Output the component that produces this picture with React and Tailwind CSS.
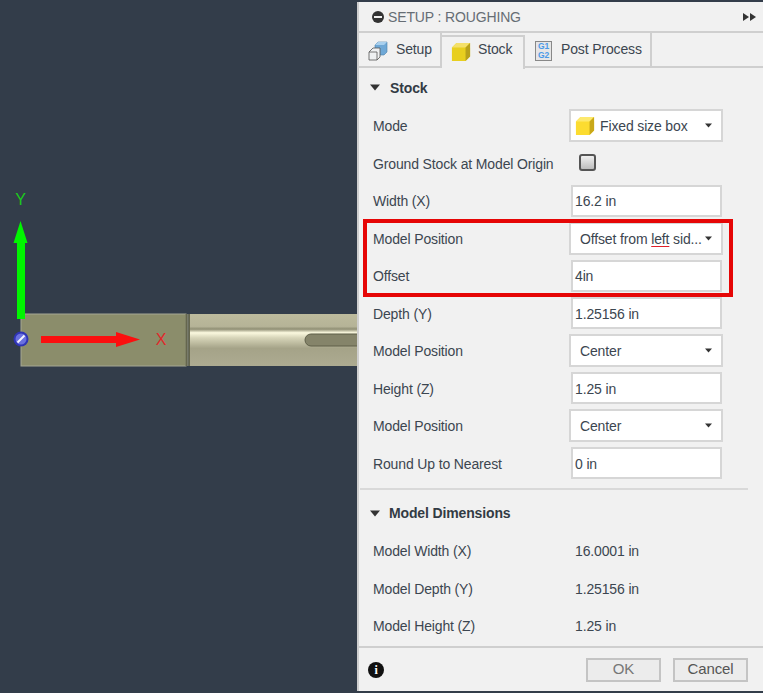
import React from 'react';

const Caret = ({ w = 10, h = 7 }) => (
  <svg width={w} height={h} viewBox="0 0 10 7" className="shrink-0">
    <path d="M0 0.5h10L5 6.500z" fill="#333" />
  </svg>
);

const CubeIcon = ({ size = 22, front = '#e8cf1f', top = '#f4e06a', side = '#b8a11c' }) => (
  <svg width={size} height={size} viewBox="0 0 22 22">
    <path d="M1 6L6 1h15v15l-5 5H1z" fill={front} />
    <path d="M1 6L6 1h15l-5 5z" fill={top} />
    <path d="M16 6l5-5v15l-5 5z" fill={side} />
  </svg>
);

const SetupIcon = () => (
  <svg width="20" height="20" viewBox="0 0 20 20">
    <path d="M7 4l3-3h9v10l-3 3H7z" fill="#6fa8d6" stroke="#4c7fa8" strokeWidth="0.6" />
    <path d="M7 4l3-3h9l-3 3z" fill="#a9d0ee" />
    <path d="M1 11l4-4h7v9l-3 3H1z" fill="#eef0f2" stroke="#555" strokeWidth="0.8" />
    <path d="M1 11h8v8" fill="none" stroke="#555" strokeWidth="0.8" />
  </svg>
);

const Tab = ({ icon, label, active, className = '' }) => (
  <div className={`flex items-center gap-2 border-r-2 border-[#cfcfcf] ${active ? 'bg-[#f1f1f1] border-t-2 mt-[2px] h-[34px] pb-[8px] relative z-10' : 'h-[33px] pb-[2px]'} ${className}`}>
    <span className="mt-[5px] flex">{icon}</span>
    <span className="pt-[1px]">{label}</span>
  </div>
);

const Row = ({ label, labelWidth = 'w-[196px]', children }) => (
  <div className="flex items-center h-[37.5px] pl-[14px]">
    <span className={`${labelWidth} shrink-0 whitespace-nowrap pt-[2px]`}>{label}</span>
    {children}
  </div>
);

const Input = ({ value }) => (
  <div className="ml-[2px] w-[151px] h-[32px] bg-white border-2 border-[#d6d6d6] flex items-center pl-[2px] pt-[2px]">{value}</div>
);

const Select = ({ value, icon }) => (
  <div className="w-[154px] h-[33px] bg-white border-2 border-[#d6d6d6] flex items-center pl-[4px] pr-[9px]">
    {icon}
    <span className="ml-[5px] pt-[2px] whitespace-nowrap flex-1 overflow-hidden">{value}</span>
    <Caret w={7} h={5} />
  </div>
);

const Viewport = () => (
  <svg width="357" height="693" viewBox="0 0 357 693" className="block shrink-0">
    <defs>
      <linearGradient id="shaft" x1="0" y1="0" x2="0" y2="1">
        <stop offset="0" stopColor="#bdbb9d" />
        <stop offset="0.24" stopColor="#b5b397" />
        <stop offset="0.29" stopColor="#8f8e74" />
        <stop offset="0.36" stopColor="#fbf9df" />
        <stop offset="0.46" stopColor="#d6d4b8" />
        <stop offset="0.66" stopColor="#a5a388" />
        <stop offset="1" stopColor="#adab91" />
      </linearGradient>
    </defs>
    <rect x="21" y="314" width="165" height="52" fill="#8b8d6b" stroke="#a5a794" strokeWidth="1" />
    <rect x="185.500" y="314" width="2" height="52" fill="#65664d" />
    <rect x="187.500" y="314" width="1" height="52" fill="#a5a68a" />
    <rect x="188.500" y="314" width="1.500" height="52" fill="#65664d" />
    <rect x="190" y="314" width="167" height="52" fill="url(#shaft)" />
    <rect x="305" y="334" width="60" height="12" rx="6" fill="#85846a" stroke="#5f5f49" />
    <path d="M17 319V243h-3.500L20.500 221l7 22H25v76z" fill="#00f500" />
    <path d="M41 336h75v-4L140 339.500l-24 7.500v-4H41z" fill="#fb0f0f" />
    <circle cx="21" cy="339" r="7.500" fill="#2f34b5" />
    <circle cx="21" cy="339" r="5.500" fill="#6a70e0" />
    <path d="M17.500 342.500L24.500 335.500" stroke="#f2f2ff" strokeWidth="2" />
    <text x="20.500" y="205" textAnchor="middle" fill="#1ccb1c" style={{ fontFamily: 'Liberation Sans', fontSize: 16 }}>Y</text>
    <text x="161" y="345" textAnchor="middle" fill="#e0282a" style={{ fontFamily: 'Liberation Sans', fontSize: 16 }}>X</text>
  </svg>
);

export default function App() {
  return (
    <div className="relative w-[763px] h-[693px] overflow-hidden flex bg-[#333d4a] text-[14px] tracking-[-0.14px] text-[#3c4650] font-['Liberation_Sans',Arial,sans-serif]">
      <Viewport />
      <div className="w-[406px] mt-[2px] h-[689px] bg-[#f1f1f1] border-l-2 border-[#cfcfcf] flex flex-col">
        <div className="h-[31px] flex items-center border-b-2 border-[#cfcfcf] pl-[13px] pr-[7px] shrink-0">
          <span className="w-[12px] h-[12px] rounded-full bg-[#333] flex items-center justify-center">
            <span className="w-[8px] h-[2px] bg-[#f1f1f1]" />
          </span>
          <span className="ml-[4px] pt-[2px] text-[#666d74]">SETUP : ROUGHING</span>
          <svg width="13" height="8" viewBox="0 0 13 8" className="ml-auto">
            <path d="M0 0l6 4-6 4zM7 0l6 4-6 4z" fill="#333" />
          </svg>
        </div>

        <div className="h-[35px] flex border-b-2 border-[#cfcfcf] shrink-0">
          <Tab icon={<SetupIcon />} label="Setup" className="w-[83px] pl-[9px]" />
          <Tab icon={<CubeIcon size={20} />} label="Stock" active className="w-[83px] pl-[9px] gap-[7px]" />
          <Tab
            icon={
              <span className="w-[17px] h-[20px] border border-[#888] bg-[#e6e6e6] text-[8.500px] leading-[9px] font-bold text-[#4a9ae8] flex items-center justify-center text-center">
                G1<br />G2
              </span>
            }
            label="Post Process"
            className="w-[127px] pl-[10px] gap-[9px]"
          />
        </div>

        <div className="flex items-center h-[39px] pl-[11px] gap-[10px] font-bold text-[#333b44] shrink-0">
          <Caret />
          <span className="pt-[2px]">Stock</span>
        </div>

        <div>
          <Row label="Mode">
            <Select value="Fixed size box" icon={<CubeIcon size={20} front="#fcdc30" top="#fde96e" side="#c9a818" />} />
          </Row>
          <Row label="Ground Stock at Model Origin">
            <span className="ml-[10px] -mt-[1px] w-[17px] h-[17px] rounded-[3px] border-2 border-[#555] bg-gradient-to-b from-[#f0f0f0] to-[#bdbdbd]" />
          </Row>
          <Row label="Width (X)"><Input value="16.2 in" /></Row>
          <Row label="Model Position">
            <Select
              value={<>Offset from <span className="underline decoration-[#e0202a] underline-offset-2">left</span> sid...</>}
            />
          </Row>
          <Row label="Offset"><Input value="4in" /></Row>
          <Row label="Depth (Y)"><Input value="1.25156 in" /></Row>
          <Row label="Model Position"><Select value="Center" /></Row>
          <Row label="Height (Z)"><Input value="1.25 in" /></Row>
          <Row label="Model Position"><Select value="Center" /></Row>
          <Row label="Round Up to Nearest"><Input value="0 in" /></Row>
        </div>

        <div className="mt-[6px] ml-[1px] mr-[15px] h-[2px] bg-[#d9d9d9] shrink-0" />

        <div className="flex items-center h-[46px] pl-[11px] gap-[9px] font-bold text-[#333b44] shrink-0">
          <Caret />
          <span className="pt-[1px]">Model Dimensions</span>
        </div>

        <div className="-mt-[4px]">
          <Row label="Model Width (X)" labelWidth="w-[202px]"><span className="pt-[2px]">16.0001 in</span></Row>
          <Row label="Model Depth (Y)" labelWidth="w-[202px]"><span className="pt-[2px]">1.25156 in</span></Row>
          <Row label="Model Height (Z)" labelWidth="w-[202px]"><span className="pt-[2px]">1.25 in</span></Row>
        </div>

        <div className="mt-auto h-[45px] border-t-2 border-[#cfcfcf] flex items-center pl-[9px] pr-[15px] shrink-0">
          <span className="w-[16px] h-[16px] rounded-full bg-[#111] text-white flex items-center justify-center text-[12px] font-bold font-['Liberation_Serif',serif]">i</span>
          <div className="ml-auto w-[75px] h-[24px] border-2 border-[#c4c4c4] bg-[#ececec] text-[#777] flex items-center justify-center text-[15px]">OK</div>
          <div className="ml-[12px] w-[75px] h-[24px] border-2 border-[#c4c4c4] bg-[#ececec] text-[#555] flex items-center justify-center text-[15px]">Cancel</div>
        </div>
      </div>

      {/* red highlight drawn over the form */}
      <div className="absolute left-[363px] top-[219px] w-[370px] h-[78px] border-[4px] border-[#e60606] pointer-events-none" />
    </div>
  );
}
